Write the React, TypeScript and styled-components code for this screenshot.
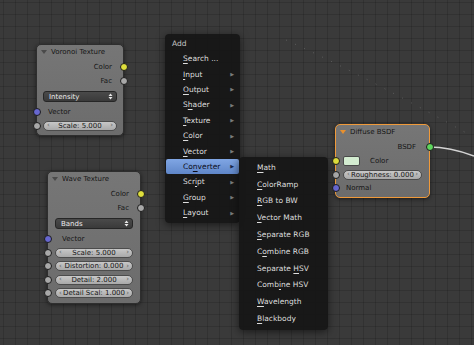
import React from 'react';
import styled, { createGlobalStyle } from 'styled-components';

const Global = createGlobalStyle`
  html, body { margin: 0; padding: 0; background: #393939; }
  body { width: 474px; height: 345px; overflow: hidden; font-family: "DejaVu Sans", "Liberation Sans", sans-serif; }
`;

const Canvas = styled.div`
  position: relative;
  width: 474px;
  height: 345px;
  overflow: hidden;
  background-color: #3a3a3a;
  background-image:
    linear-gradient(to right, rgba(0, 0, 0, 0.14) 1px, transparent 1px),
    linear-gradient(to bottom, rgba(0, 0, 0, 0.14) 1px, transparent 1px);
  background-size: 12px 12px;
  background-position: 3px 2px;
`;

const Links = styled.svg`
  position: absolute;
  left: 0;
  top: 0;
  width: 474px;
  height: 345px;
  pointer-events: none;
`;

/* ---------- nodes ---------- */

const NodeBox = styled.div<{ $x: number; $y: number; $w: number; $selected?: boolean }>`
  position: absolute;
  left: ${p => p.$x}px;
  top: ${p => p.$y}px;
  width: ${p => p.$w}px;
  box-sizing: border-box;
  display: flex;
  flex-direction: column;
  padding-bottom: 2.5px;
  background: linear-gradient(#767676, #6c6c6c);
  border: ${p => (p.$selected ? '1.5px solid #f09a3a' : '1px solid #2e2e2e')};
  border-radius: 5px;
  box-shadow: 0 1px 4px rgba(0, 0, 0, 0.55);
  color: #161616;
  font-size: 7px;
`;

const Header = styled.div`
  height: 14px;
  margin-bottom: 1px;
  display: flex;
  align-items: center;
  gap: 4px;
  padding-left: 4px;
  white-space: nowrap;
`;

const Toggle = styled.span<{ $color?: string }>`
  width: 0;
  height: 0;
  border-left: 3px solid transparent;
  border-right: 3px solid transparent;
  border-top: 4px solid ${p => p.$color ?? '#4a4a4a'};
`;

const Row = styled.div<{ $h: number; $out?: boolean; $pad?: number }>`
  position: relative;
  height: ${p => p.$h}px;
  display: flex;
  align-items: center;
  justify-content: ${p => (p.$out ? 'flex-end' : 'flex-start')};
  gap: 10px;
  padding: 0 ${p => p.$pad ?? 11}px;
  white-space: nowrap;
`;

const socketColors = {
  color: '#dede3c',
  float: '#a8a8a8',
  vector: '#6767d0',
  shader: '#5ed65e',
};
type SocketKind = keyof typeof socketColors;

const Socket = styled.span<{ $kind: SocketKind; $side: 'left' | 'right' }>`
  position: absolute;
  top: 50%;
  ${p => p.$side}: -4.5px;
  width: 6px;
  height: 6px;
  margin-top: -4px;
  border-radius: 50%;
  background: ${p => socketColors[p.$kind]};
  border: 1px solid #1c1c1c;
`;

const Dropdown = styled.div`
  flex: 1;
  height: 11px;
  box-sizing: border-box;
  display: flex;
  align-items: center;
  justify-content: space-between;
  padding: 0 3px 0 5px;
  background: linear-gradient(#4a4a4a, #3a3a3a);
  border: 1px solid #262626;
  border-radius: 3px;
  color: #ececec;
`;

const Field = styled.div`
  flex: 1;
  height: 10px;
  box-sizing: border-box;
  display: flex;
  align-items: center;
  justify-content: space-between;
  padding: 0 3px;
  background: linear-gradient(#c8c8c8, #a9a9a9);
  border: 1px solid #4c4c4c;
  border-radius: 6px;
  color: #161616;
`;

const FieldArrow = styled.span`
  color: #5e5e5e;
  font-size: 7px;
  line-height: 1;
`;

const Swatch = styled.span`
  width: 17px;
  height: 10px;
  box-sizing: border-box;
  border: 1px solid #4a4a4a;
  border-radius: 2px;
  background: #d3ecd0;
`;

/* ---------- menus ---------- */

const Menu = styled.div<{ $x: number; $y: number; $w: number }>`
  position: absolute;
  left: ${p => p.$x}px;
  top: ${p => p.$y}px;
  width: ${p => p.$w}px;
  box-sizing: border-box;
  display: flex;
  flex-direction: column;
  padding: 2px 1px 3px;
  background: rgba(22, 22, 22, 0.95);
  border-radius: 4px;
  box-shadow: 0 2px 8px rgba(0, 0, 0, 0.55);
  color: #dedede;
  font-size: 7.5px;
`;

const MenuTitle = styled.div`
  height: 15px;
  display: flex;
  align-items: center;
  padding-left: 6px;
  color: #c8c8c8;
`;

const MenuItem = styled.div<{ $h: number; $active?: boolean; $indent: number }>`
  height: ${p => p.$h}px;
  display: flex;
  align-items: center;
  justify-content: space-between;
  padding: 0 5px 0 ${p => p.$indent}px;
  white-space: nowrap;
  color: ${p => (p.$active ? '#0c0c18' : '#dedede')};
  background: ${p => (p.$active ? 'linear-gradient(#80a6e4, #5f86c8)' : 'transparent')};
  border-radius: ${p => (p.$active ? '2px' : '0')};
`;

const Hot = styled.span`
  text-decoration: underline;
  text-decoration-thickness: 1px;
  text-underline-offset: 2px;
`;

const SubArrow = styled.span<{ $active?: boolean }>`
  font-size: 5px;
  color: ${p => (p.$active ? '#1a2a4a' : '#7a7a7a')};
`;

function UpDown() {
  return (
    <svg width="5" height="7" viewBox="0 0 5 7">
      <path d="M0.5 3 L2.5 0.5 L4.5 3 Z M0.5 4 L2.5 6.5 L4.5 4 Z" fill="#e8e8e8" />
    </svg>
  );
}

function Label({ text, hot }: { text: string; hot: number }) {
  return (
    <span>
      {text.slice(0, hot)}
      <Hot>{text[hot]}</Hot>
      {text.slice(hot + 1)}
    </span>
  );
}

function NumField({ label }: { label: string }) {
  return (
    <Field>
      <FieldArrow>‹</FieldArrow>
      <span>{label}</span>
      <FieldArrow>›</FieldArrow>
    </Field>
  );
}

const addItems: { t: string; h: number; sub?: boolean; active?: boolean }[] = [
  { t: 'Search ...', h: 0 },
  { t: 'Input', h: 0, sub: true },
  { t: 'Output', h: 0, sub: true },
  { t: 'Shader', h: 1, sub: true },
  { t: 'Texture', h: 0, sub: true },
  { t: 'Color', h: 0, sub: true },
  { t: 'Vector', h: 0, sub: true },
  { t: 'Converter', h: 2, sub: true, active: true },
  { t: 'Script', h: 3, sub: true },
  { t: 'Group', h: 0, sub: true },
  { t: 'Layout', h: 0, sub: true },
];

const converterItems: { t: string; h: number }[] = [
  { t: 'Math', h: 0 },
  { t: 'ColorRamp', h: 0 },
  { t: 'RGB to BW', h: 0 },
  { t: 'Vector Math', h: 0 },
  { t: 'Separate RGB', h: 0 },
  { t: 'Combine RGB', h: 1 },
  { t: 'Separate HSV', h: 9 },
  { t: 'Combine HSV', h: 4 },
  { t: 'Wavelength', h: 0 },
  { t: 'Blackbody', h: 0 },
];

export default function App() {
  return (
    <>
      <Global />
      <Canvas>
        <Links viewBox="0 0 474 345">
          <path
            d="M286 40 C 330 60, 380 85, 470 135"
            stroke="rgba(220,220,220,0.22)"
            strokeWidth="1"
            strokeDasharray="1 9"
            fill="none"
          />
          <path d="M429 147 C 446 147, 458 150, 474 156" stroke="#d4d4d4" strokeWidth="1.5" fill="none" />
        </Links>

        {/* Voronoi Texture */}
        <NodeBox $x={36} $y={44} $w={88}>
          <Header>
            <Toggle />
            <span>Voronoi Texture</span>
          </Header>
          <Row $h={14} $out>
            Color
            <Socket $kind="color" $side="right" />
          </Row>
          <Row $h={14} $out>
            Fac
            <Socket $kind="float" $side="right" />
          </Row>
          <Row $h={17} $pad={6}>
            <Dropdown>
              <span>Intensity</span>
              <UpDown />
            </Dropdown>
          </Row>
          <Row $h={14}>
            Vector
            <Socket $kind="vector" $side="left" />
          </Row>
          <Row $h={13.5} $pad={6}>
            <NumField label="Scale: 5.000" />
            <Socket $kind="float" $side="left" />
          </Row>
        </NodeBox>

        {/* Wave Texture */}
        <NodeBox $x={47} $y={171} $w={94}>
          <Header>
            <Toggle />
            <span>Wave Texture</span>
          </Header>
          <Row $h={14} $out>
            Color
            <Socket $kind="color" $side="right" />
          </Row>
          <Row $h={14} $out>
            Fac
            <Socket $kind="float" $side="right" />
          </Row>
          <Row $h={17} $pad={7}>
            <Dropdown>
              <span>Bands</span>
              <UpDown />
            </Dropdown>
          </Row>
          <Row $h={14} $pad={14}>
            Vector
            <Socket $kind="vector" $side="left" />
          </Row>
          {['Scale: 5.000', 'Distortion: 0.000', 'Detail: 2.000', 'Detail Scal: 1.000'].map(l => (
            <Row key={l} $h={13.5} $pad={7}>
              <NumField label={l} />
              <Socket $kind="float" $side="left" />
            </Row>
          ))}
        </NodeBox>

        {/* Diffuse BSDF */}
        <NodeBox $x={335} $y={124} $w={95} $selected>
          <Header>
            <Toggle $color="#e8902e" />
            <span>Diffuse BSDF</span>
          </Header>
          <Row $h={14} $out $pad={13}>
            BSDF
            <Socket $kind="shader" $side="right" />
          </Row>
          <Row $h={14} $pad={7}>
            <Swatch />
            Color
            <Socket $kind="color" $side="left" />
          </Row>
          <Row $h={13} $pad={7}>
            <NumField label="Roughness: 0.000" />
            <Socket $kind="float" $side="left" />
          </Row>
          <Row $h={13} $pad={10}>
            Normal
            <Socket $kind="vector" $side="left" />
          </Row>
        </NodeBox>

        {/* Add menu */}
        <Menu $x={165} $y={34} $w={75}>
          <MenuTitle>Add</MenuTitle>
          {addItems.map(it => (
            <MenuItem key={it.t} $h={15.4} $indent={17} $active={it.active}>
              <Label text={it.t} hot={it.h} />
              {it.sub && <SubArrow $active={it.active}>▶</SubArrow>}
            </MenuItem>
          ))}
        </Menu>

        {/* Converter submenu */}
        <Menu $x={239} $y={157} $w={89}>
          {converterItems.map(it => (
            <MenuItem key={it.t} $h={16.8} $indent={17}>
              <Label text={it.t} hot={it.h} />
            </MenuItem>
          ))}
        </Menu>
      </Canvas>
    </>
  );
}
